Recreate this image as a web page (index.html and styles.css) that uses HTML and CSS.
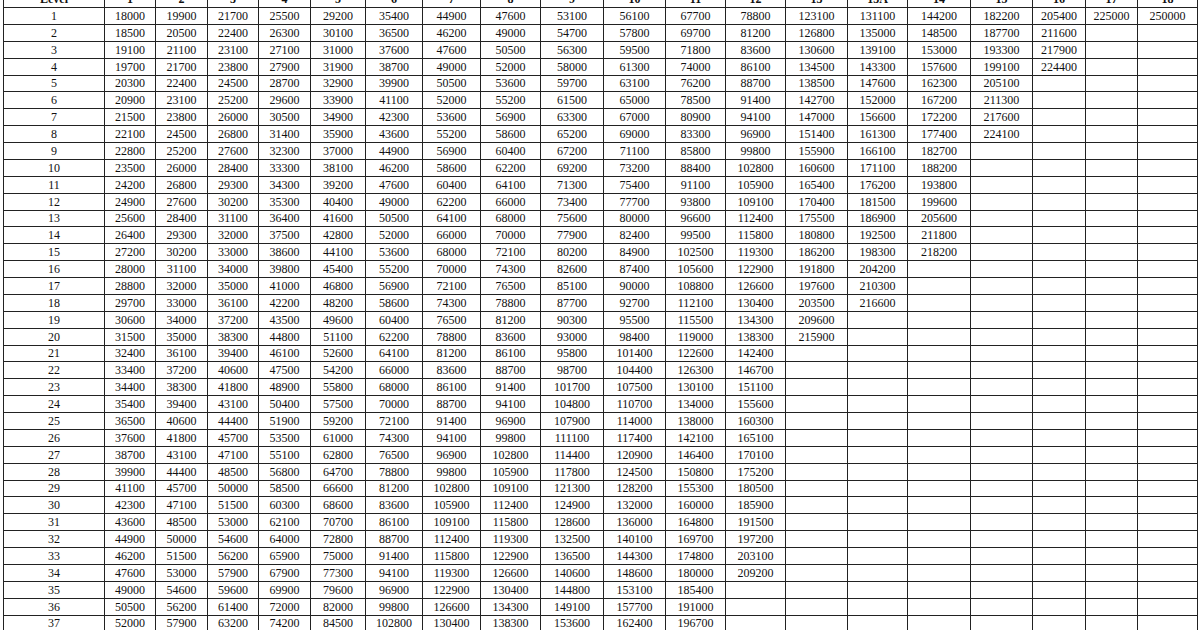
FILE: index.html
```html
<!DOCTYPE html>
<html>
<head>
<meta charset="utf-8">
<link rel="stylesheet" href="styles.css">
</head>
<body>
<table class="matrix">
<colgroup>
<col class="w101"><col class="w51"><col class="w52"><col class="w51"><col class="w52"><col class="w55"><col class="w57"><col class="w58"><col class="w60"><col class="w63"><col class="w62"><col class="w60"><col class="w60"><col class="w62"><col class="w60"><col class="w63"><col class="w62"><col class="w53"><col class="w52"><col class="w60">
</colgroup>
<thead>
<tr class="head"><th>Level</th><th>1</th><th>2</th><th>3</th><th>4</th><th>5</th><th>6</th><th>7</th><th>8</th><th>9</th><th>10</th><th>11</th><th>12</th><th>13</th><th>13A</th><th>14</th><th>15</th><th>16</th><th>17</th><th>18</th></tr>
</thead>
<tbody>
<tr><td>1</td><td>18000</td><td>19900</td><td>21700</td><td>25500</td><td>29200</td><td>35400</td><td>44900</td><td>47600</td><td>53100</td><td>56100</td><td>67700</td><td>78800</td><td>123100</td><td>131100</td><td>144200</td><td>182200</td><td>205400</td><td>225000</td><td>250000</td></tr>
<tr><td>2</td><td>18500</td><td>20500</td><td>22400</td><td>26300</td><td>30100</td><td>36500</td><td>46200</td><td>49000</td><td>54700</td><td>57800</td><td>69700</td><td>81200</td><td>126800</td><td>135000</td><td>148500</td><td>187700</td><td>211600</td><td></td><td></td></tr>
<tr><td>3</td><td>19100</td><td>21100</td><td>23100</td><td>27100</td><td>31000</td><td>37600</td><td>47600</td><td>50500</td><td>56300</td><td>59500</td><td>71800</td><td>83600</td><td>130600</td><td>139100</td><td>153000</td><td>193300</td><td>217900</td><td></td><td></td></tr>
<tr><td>4</td><td>19700</td><td>21700</td><td>23800</td><td>27900</td><td>31900</td><td>38700</td><td>49000</td><td>52000</td><td>58000</td><td>61300</td><td>74000</td><td>86100</td><td>134500</td><td>143300</td><td>157600</td><td>199100</td><td>224400</td><td></td><td></td></tr>
<tr><td>5</td><td>20300</td><td>22400</td><td>24500</td><td>28700</td><td>32900</td><td>39900</td><td>50500</td><td>53600</td><td>59700</td><td>63100</td><td>76200</td><td>88700</td><td>138500</td><td>147600</td><td>162300</td><td>205100</td><td></td><td></td><td></td></tr>
<tr><td>6</td><td>20900</td><td>23100</td><td>25200</td><td>29600</td><td>33900</td><td>41100</td><td>52000</td><td>55200</td><td>61500</td><td>65000</td><td>78500</td><td>91400</td><td>142700</td><td>152000</td><td>167200</td><td>211300</td><td></td><td></td><td></td></tr>
<tr><td>7</td><td>21500</td><td>23800</td><td>26000</td><td>30500</td><td>34900</td><td>42300</td><td>53600</td><td>56900</td><td>63300</td><td>67000</td><td>80900</td><td>94100</td><td>147000</td><td>156600</td><td>172200</td><td>217600</td><td></td><td></td><td></td></tr>
<tr><td>8</td><td>22100</td><td>24500</td><td>26800</td><td>31400</td><td>35900</td><td>43600</td><td>55200</td><td>58600</td><td>65200</td><td>69000</td><td>83300</td><td>96900</td><td>151400</td><td>161300</td><td>177400</td><td>224100</td><td></td><td></td><td></td></tr>
<tr><td>9</td><td>22800</td><td>25200</td><td>27600</td><td>32300</td><td>37000</td><td>44900</td><td>56900</td><td>60400</td><td>67200</td><td>71100</td><td>85800</td><td>99800</td><td>155900</td><td>166100</td><td>182700</td><td></td><td></td><td></td><td></td></tr>
<tr><td>10</td><td>23500</td><td>26000</td><td>28400</td><td>33300</td><td>38100</td><td>46200</td><td>58600</td><td>62200</td><td>69200</td><td>73200</td><td>88400</td><td>102800</td><td>160600</td><td>171100</td><td>188200</td><td></td><td></td><td></td><td></td></tr>
<tr><td>11</td><td>24200</td><td>26800</td><td>29300</td><td>34300</td><td>39200</td><td>47600</td><td>60400</td><td>64100</td><td>71300</td><td>75400</td><td>91100</td><td>105900</td><td>165400</td><td>176200</td><td>193800</td><td></td><td></td><td></td><td></td></tr>
<tr><td>12</td><td>24900</td><td>27600</td><td>30200</td><td>35300</td><td>40400</td><td>49000</td><td>62200</td><td>66000</td><td>73400</td><td>77700</td><td>93800</td><td>109100</td><td>170400</td><td>181500</td><td>199600</td><td></td><td></td><td></td><td></td></tr>
<tr><td>13</td><td>25600</td><td>28400</td><td>31100</td><td>36400</td><td>41600</td><td>50500</td><td>64100</td><td>68000</td><td>75600</td><td>80000</td><td>96600</td><td>112400</td><td>175500</td><td>186900</td><td>205600</td><td></td><td></td><td></td><td></td></tr>
<tr><td>14</td><td>26400</td><td>29300</td><td>32000</td><td>37500</td><td>42800</td><td>52000</td><td>66000</td><td>70000</td><td>77900</td><td>82400</td><td>99500</td><td>115800</td><td>180800</td><td>192500</td><td>211800</td><td></td><td></td><td></td><td></td></tr>
<tr><td>15</td><td>27200</td><td>30200</td><td>33000</td><td>38600</td><td>44100</td><td>53600</td><td>68000</td><td>72100</td><td>80200</td><td>84900</td><td>102500</td><td>119300</td><td>186200</td><td>198300</td><td>218200</td><td></td><td></td><td></td><td></td></tr>
<tr><td>16</td><td>28000</td><td>31100</td><td>34000</td><td>39800</td><td>45400</td><td>55200</td><td>70000</td><td>74300</td><td>82600</td><td>87400</td><td>105600</td><td>122900</td><td>191800</td><td>204200</td><td></td><td></td><td></td><td></td><td></td></tr>
<tr><td>17</td><td>28800</td><td>32000</td><td>35000</td><td>41000</td><td>46800</td><td>56900</td><td>72100</td><td>76500</td><td>85100</td><td>90000</td><td>108800</td><td>126600</td><td>197600</td><td>210300</td><td></td><td></td><td></td><td></td><td></td></tr>
<tr><td>18</td><td>29700</td><td>33000</td><td>36100</td><td>42200</td><td>48200</td><td>58600</td><td>74300</td><td>78800</td><td>87700</td><td>92700</td><td>112100</td><td>130400</td><td>203500</td><td>216600</td><td></td><td></td><td></td><td></td><td></td></tr>
<tr><td>19</td><td>30600</td><td>34000</td><td>37200</td><td>43500</td><td>49600</td><td>60400</td><td>76500</td><td>81200</td><td>90300</td><td>95500</td><td>115500</td><td>134300</td><td>209600</td><td></td><td></td><td></td><td></td><td></td><td></td></tr>
<tr><td>20</td><td>31500</td><td>35000</td><td>38300</td><td>44800</td><td>51100</td><td>62200</td><td>78800</td><td>83600</td><td>93000</td><td>98400</td><td>119000</td><td>138300</td><td>215900</td><td></td><td></td><td></td><td></td><td></td><td></td></tr>
<tr><td>21</td><td>32400</td><td>36100</td><td>39400</td><td>46100</td><td>52600</td><td>64100</td><td>81200</td><td>86100</td><td>95800</td><td>101400</td><td>122600</td><td>142400</td><td></td><td></td><td></td><td></td><td></td><td></td><td></td></tr>
<tr><td>22</td><td>33400</td><td>37200</td><td>40600</td><td>47500</td><td>54200</td><td>66000</td><td>83600</td><td>88700</td><td>98700</td><td>104400</td><td>126300</td><td>146700</td><td></td><td></td><td></td><td></td><td></td><td></td><td></td></tr>
<tr><td>23</td><td>34400</td><td>38300</td><td>41800</td><td>48900</td><td>55800</td><td>68000</td><td>86100</td><td>91400</td><td>101700</td><td>107500</td><td>130100</td><td>151100</td><td></td><td></td><td></td><td></td><td></td><td></td><td></td></tr>
<tr><td>24</td><td>35400</td><td>39400</td><td>43100</td><td>50400</td><td>57500</td><td>70000</td><td>88700</td><td>94100</td><td>104800</td><td>110700</td><td>134000</td><td>155600</td><td></td><td></td><td></td><td></td><td></td><td></td><td></td></tr>
<tr><td>25</td><td>36500</td><td>40600</td><td>44400</td><td>51900</td><td>59200</td><td>72100</td><td>91400</td><td>96900</td><td>107900</td><td>114000</td><td>138000</td><td>160300</td><td></td><td></td><td></td><td></td><td></td><td></td><td></td></tr>
<tr><td>26</td><td>37600</td><td>41800</td><td>45700</td><td>53500</td><td>61000</td><td>74300</td><td>94100</td><td>99800</td><td>111100</td><td>117400</td><td>142100</td><td>165100</td><td></td><td></td><td></td><td></td><td></td><td></td><td></td></tr>
<tr><td>27</td><td>38700</td><td>43100</td><td>47100</td><td>55100</td><td>62800</td><td>76500</td><td>96900</td><td>102800</td><td>114400</td><td>120900</td><td>146400</td><td>170100</td><td></td><td></td><td></td><td></td><td></td><td></td><td></td></tr>
<tr><td>28</td><td>39900</td><td>44400</td><td>48500</td><td>56800</td><td>64700</td><td>78800</td><td>99800</td><td>105900</td><td>117800</td><td>124500</td><td>150800</td><td>175200</td><td></td><td></td><td></td><td></td><td></td><td></td><td></td></tr>
<tr><td>29</td><td>41100</td><td>45700</td><td>50000</td><td>58500</td><td>66600</td><td>81200</td><td>102800</td><td>109100</td><td>121300</td><td>128200</td><td>155300</td><td>180500</td><td></td><td></td><td></td><td></td><td></td><td></td><td></td></tr>
<tr><td>30</td><td>42300</td><td>47100</td><td>51500</td><td>60300</td><td>68600</td><td>83600</td><td>105900</td><td>112400</td><td>124900</td><td>132000</td><td>160000</td><td>185900</td><td></td><td></td><td></td><td></td><td></td><td></td><td></td></tr>
<tr><td>31</td><td>43600</td><td>48500</td><td>53000</td><td>62100</td><td>70700</td><td>86100</td><td>109100</td><td>115800</td><td>128600</td><td>136000</td><td>164800</td><td>191500</td><td></td><td></td><td></td><td></td><td></td><td></td><td></td></tr>
<tr><td>32</td><td>44900</td><td>50000</td><td>54600</td><td>64000</td><td>72800</td><td>88700</td><td>112400</td><td>119300</td><td>132500</td><td>140100</td><td>169700</td><td>197200</td><td></td><td></td><td></td><td></td><td></td><td></td><td></td></tr>
<tr><td>33</td><td>46200</td><td>51500</td><td>56200</td><td>65900</td><td>75000</td><td>91400</td><td>115800</td><td>122900</td><td>136500</td><td>144300</td><td>174800</td><td>203100</td><td></td><td></td><td></td><td></td><td></td><td></td><td></td></tr>
<tr><td>34</td><td>47600</td><td>53000</td><td>57900</td><td>67900</td><td>77300</td><td>94100</td><td>119300</td><td>126600</td><td>140600</td><td>148600</td><td>180000</td><td>209200</td><td></td><td></td><td></td><td></td><td></td><td></td><td></td></tr>
<tr><td>35</td><td>49000</td><td>54600</td><td>59600</td><td>69900</td><td>79600</td><td>96900</td><td>122900</td><td>130400</td><td>144800</td><td>153100</td><td>185400</td><td></td><td></td><td></td><td></td><td></td><td></td><td></td><td></td></tr>
<tr><td>36</td><td>50500</td><td>56200</td><td>61400</td><td>72000</td><td>82000</td><td>99800</td><td>126600</td><td>134300</td><td>149100</td><td>157700</td><td>191000</td><td></td><td></td><td></td><td></td><td></td><td></td><td></td><td></td></tr>
<tr><td>37</td><td>52000</td><td>57900</td><td>63200</td><td>74200</td><td>84500</td><td>102800</td><td>130400</td><td>138300</td><td>153600</td><td>162400</td><td>196700</td><td></td><td></td><td></td><td></td><td></td><td></td><td></td><td></td></tr>
</tbody>
</table>
</body>
</html>
```

FILE: styles.css
```css
html, body {
  margin: 0;
  padding: 0;
  background: #ffffff;
  overflow: hidden;
}

.matrix {
  border-collapse: collapse;
  table-layout: fixed;
  width: 1194px;
  margin: -10px 0 0 3px;
  font-family: "Liberation Serif", "Times New Roman", serif;
  font-size: 12px;
  color: #111;
}

.matrix th,
.matrix td {
  border: 1.5px solid #222;
  padding: 0;
  text-align: center;
  vertical-align: middle;
  line-height: 14px;
  white-space: nowrap;
  overflow: hidden;
}

.matrix th {
  font-weight: bold;
}

.matrix tr {
  height: 16.89px;
}

.matrix tr.head {
  height: 17px;
}

.w101 { width: 101px; }
.w51 { width: 51px; }
.w52 { width: 52px; }
.w53 { width: 53px; }
.w55 { width: 55px; }
.w57 { width: 57px; }
.w58 { width: 58px; }
.w60 { width: 60px; }
.w62 { width: 62px; }
.w63 { width: 63px; }
```
